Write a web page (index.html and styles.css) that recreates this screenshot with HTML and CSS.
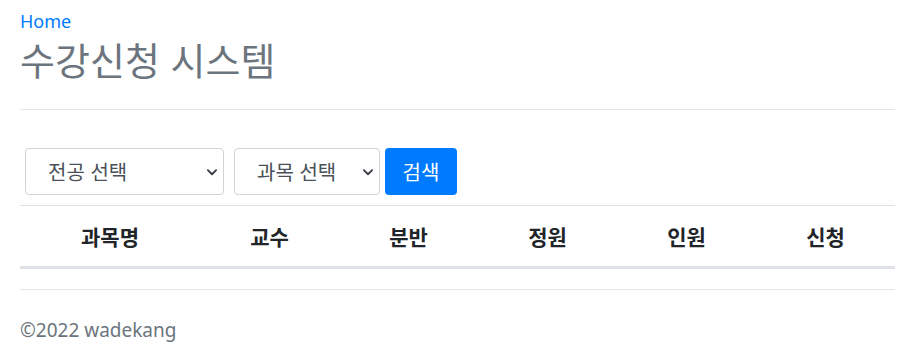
FILE: index.html
```html
<!DOCTYPE html>
<html lang="ko">
<head>
<meta charset="utf-8">
<title>수강신청 시스템</title>
<link rel="stylesheet" href="styles.css">
</head>
<body>
<div class="container">
  <header class="header">
    <a class="home" href="#">Home</a>
    <h1 class="title">수강신청 시스템</h1>
  </header>
  <hr class="rule rule-top">
  <form class="search">
    <div class="select select-major"><span>전공 선택</span><svg viewBox="0 0 16 16" width="12" height="12"><path d="M2.5 5.5 L8 11 L13.5 5.5" fill="none" stroke="#343a40" stroke-width="2.4" stroke-linecap="round" stroke-linejoin="round"/></svg></div>
    <div class="select select-course"><span>과목 선택</span><svg viewBox="0 0 16 16" width="12" height="12"><path d="M2.5 5.5 L8 11 L13.5 5.5" fill="none" stroke="#343a40" stroke-width="2.4" stroke-linecap="round" stroke-linejoin="round"/></svg></div>
    <button type="button" class="btn">검색</button>
  </form>
  <div class="table">
    <div class="thead">
      <div class="th">과목명</div>
      <div class="th">교수</div>
      <div class="th">분반</div>
      <div class="th">정원</div>
      <div class="th">인원</div>
      <div class="th">신청</div>
    </div>
  </div>
  <hr class="rule rule-foot">
  <footer class="footer">©2022 wadekang</footer>
</div>
</body>
</html>
```
FILE: styles.css
```css
* { box-sizing: border-box; }
html, body { margin: 0; padding: 0; background: #fff; }
body {
  font-family: "Noto Sans", "Noto Sans CJK KR", sans-serif;
  color: #212529;
}
.container { width: 924px; padding: 0 29px 0 20px; }
.header { padding-top: 8px; }
.home {
  display: block;
  color: #007bff;
  text-decoration: none;
  font-size: 18px;
  line-height: 26px;
  height: 26px;
}
.title {
  margin: 0;
  font-family: "Noto Sans CJK KR", sans-serif;
  font-weight: 400;
  font-size: 38px;
  line-height: 50px;
  color: #6c757d;
}
.rule { border: 0; border-top: 1px solid #e5e5e5; margin: 0; }
.rule-top { margin-top: 25px; }
.search {
  display: flex;
  align-items: center;
  margin-top: 38px;
  padding-left: 5px;
  height: 47px;
}
.select {
  display: flex;
  align-items: center;
  justify-content: space-between;
  height: 47px;
  border: 1px solid #ced4da;
  border-radius: 4px;
  padding: 0 5px 0 22px;
  font-family: "Noto Sans CJK KR", sans-serif;
  font-size: 20px;
  color: #495057;
}
.select-major { width: 199px; margin-right: 10px; }
.select-course { width: 146px; margin-right: 5px; }
.btn {
  height: 47px;
  width: 72px;
  border: 0;
  border-radius: 4px;
  background: #007bff;
  color: #fff;
  font-family: "Noto Sans CJK KR", sans-serif;
  font-size: 20px;
  padding: 0;
}
.table { margin-top: 10px; border-top: 1px solid #dee2e6; }
.thead {
  display: grid;
  grid-template-columns: 180px repeat(5, 139px);
  height: 63px;
  border-bottom: 3px solid #dee2e6;
  align-items: center;
}
.th {
  text-align: center;
  font-family: "Noto Sans CJK KR", sans-serif;
  font-weight: 700;
  font-size: 21px;
  color: #212529;
}
.rule-foot { margin-top: 20px; }
.footer {
  padding-top: 27px;
  font-size: 19px;
  line-height: 26px;
  color: #6c757d;
}
```
